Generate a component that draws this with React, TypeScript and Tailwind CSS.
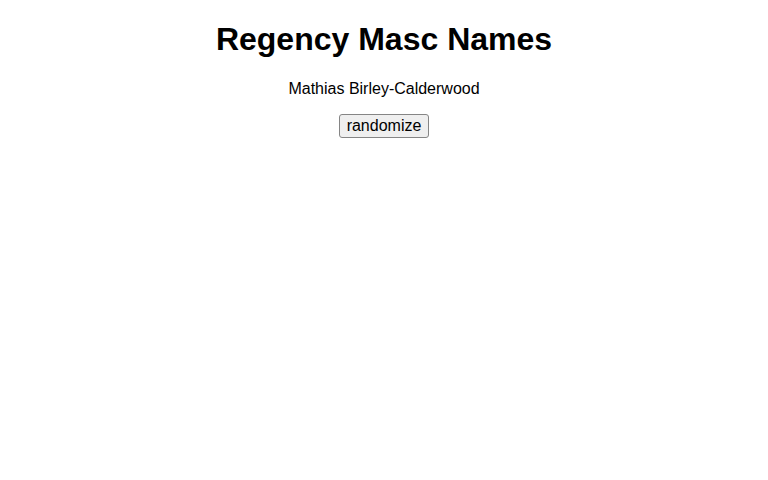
import { useState } from 'react';

const firstNames = ['Mathias', 'Edmund', 'Frederick', 'Lucian', 'Ambrose', 'Percival'];
const lastNames = ['Birley-Calderwood', 'Ashcombe', 'Davenport', 'Kingsley-Hale', 'Montrose', 'Whitcombe'];

const App = () => {
  const [name, setName] = useState('Mathias Birley-Calderwood');

  const randomize = () => {
    const f = firstNames[Math.floor(Math.random() * firstNames.length)];
    const l = lastNames[Math.floor(Math.random() * lastNames.length)];
    setName(`${f} ${l}`);
  };

  return (
    <div className="min-h-screen bg-white text-black text-center font-['Liberation_Sans',Arial,sans-serif] pt-[21.44px]">
      <h1 className="text-[32px] font-bold leading-[normal]">Regency Masc Names</h1>
      <p className="mt-[21.44px] text-base leading-[normal]">{name}</p>
      <button
        className="mt-4 px-[7px] py-[2px] text-base leading-[normal] bg-[#efefef] border border-[#858585] rounded-[3px] hover:bg-[#e5e5e5]"
        onClick={randomize}
      >
        randomize
      </button>
    </div>
  );
};

export default App;
